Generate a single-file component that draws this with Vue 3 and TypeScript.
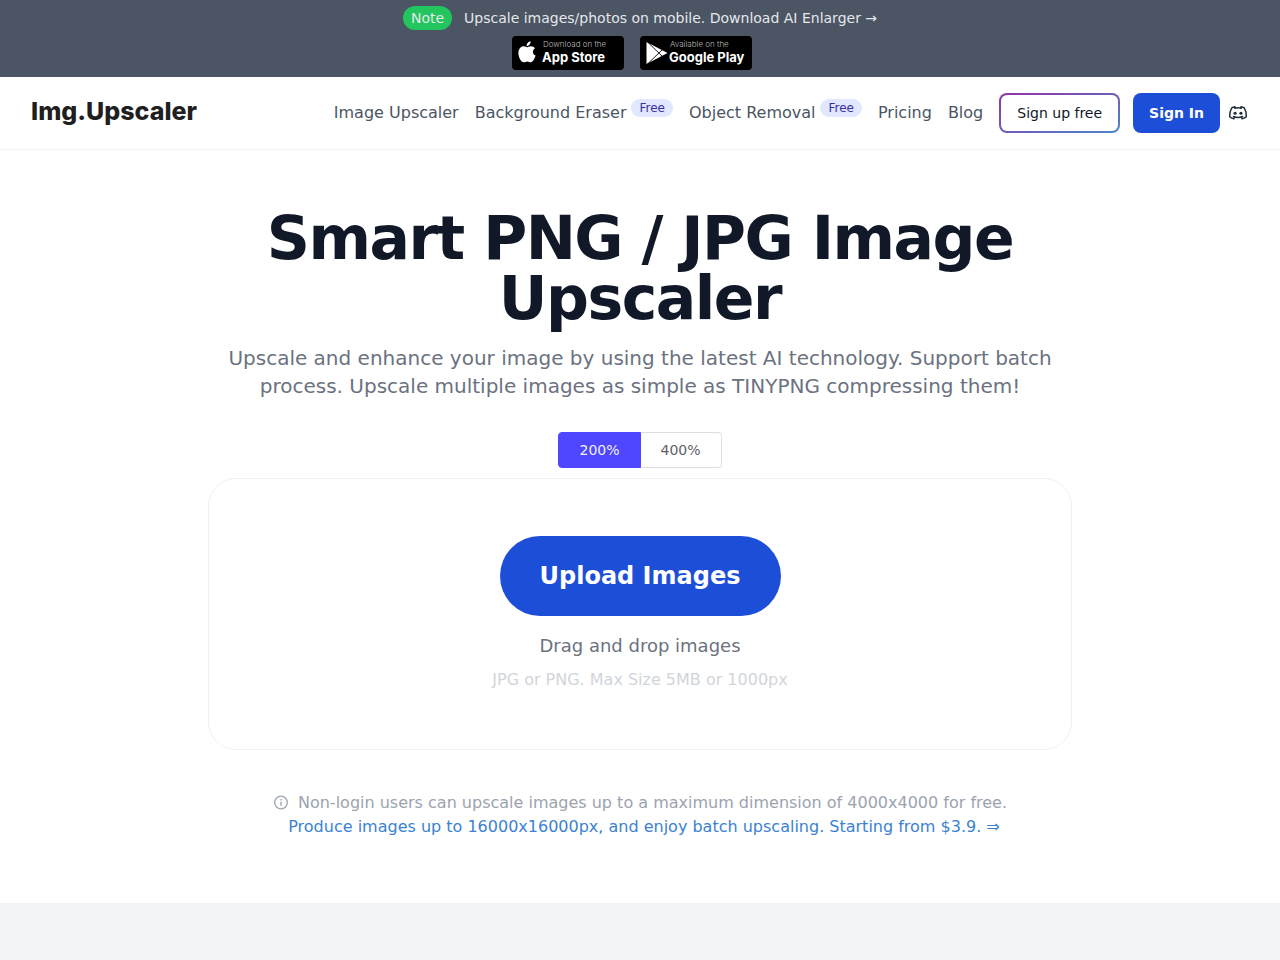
<script setup lang="ts">
import { ref } from 'vue'

interface NavItem {
  label: string
  free?: boolean
}

const navItems: NavItem[] = [
  { label: 'Image Upscaler' },
  { label: 'Background Eraser', free: true },
  { label: 'Object Removal', free: true },
  { label: 'Pricing' },
  { label: 'Blog' },
]

const scales: string[] = ['200%', '400%']
const scale = ref<string>('200%')
</script>

<template>
  <div class="page">
    <div class="banner">
      <a class="notice" href="#">
        <span class="note">Note</span>
        <span>Upscale images/photos on mobile. Download AI Enlarger →</span>
      </a>
      <div class="stores">
        <a class="store" href="#">
          <svg class="apple" viewBox="0 0 18 22" aria-hidden="true">
            <path d="M12.6 0.2C12.8 2.600 10.900 5 8.700 5C8.400 2.700 10.500 0.500 12.600 0.200Z M9.100 6.300C10 6.300 11 5.200 13 5.200C14.700 5.200 16.200 6 17 7.200C13.900 9 14.400 13.300 17.600 14.600C16.800 17.400 14.900 21.200 12.900 21.200C11.500 21.200 11 20.400 9.300 20.400C7.600 20.400 7 21.200 5.700 21.200C3.200 21.200 0.400 16.500 0.400 12C0.400 7.700 3.100 5.300 5.700 5.300C7.300 5.300 8.300 6.300 9.100 6.300Z" />
          </svg>
          <span class="store-text">
            <span class="store-top">Download on the</span>
            <span class="store-name">App Store</span>
          </span>
        </a>
        <a class="store play-store" href="#">
          <svg class="play" viewBox="0 0 22 24" aria-hidden="true">
            <path d="M0.500 1L21.500 12L0.500 23Z" />
            <path class="cut" d="M1 0.500L16.500 15.500M1 23.500L16.500 8.500" />
          </svg>
          <span class="store-text">
            <span class="store-top">Available on the</span>
            <span class="store-name">Google Play</span>
          </span>
        </a>
      </div>
    </div>

    <header class="header">
      <a class="logo" href="#">Img.Upscaler</a>
      <nav class="nav">
        <a v-for="item in navItems" :key="item.label" class="nav-link" href="#">
          {{ item.label }}<span v-if="item.free" class="free">Free</span>
        </a>
        <div class="actions">
          <button class="signup" type="button">Sign up free</button>
          <button class="signin" type="button">Sign In</button>
          <a class="discord" href="#" aria-label="Discord">
            <svg viewBox="0 0 24 24" aria-hidden="true">
              <circle class="eye" cx="8.500" cy="12.300" r="1.900" />
              <circle class="eye" cx="15.500" cy="12.300" r="1.900" />
              <path d="M8 6.200C10.500 5.600 13.500 5.600 16 6.200M6.500 16.200C10 17.700 14 17.700 17.500 16.200" />
              <path d="M16 16.800L17 19C19 18.600 20.700 17.900 22 16.600C22.200 12.500 21.400 9 19.500 5.900C18.200 5.100 17 4.700 15.600 4.500L15 6" />
              <path d="M8 16.800L7 19C5 18.600 3.300 17.900 2 16.600C1.800 12.500 2.600 9 4.500 5.900C5.800 5.100 7 4.700 8.400 4.500L9 6" />
            </svg>
          </a>
        </div>
      </nav>
    </header>

    <main class="hero">
      <h1>Smart PNG / JPG Image Upscaler</h1>
      <p class="lead">
        Upscale and enhance your image by using the latest AI technology. Support batch process.
        Upscale multiple images as simple as TINYPNG compressing them!
      </p>
      <div class="toggle" role="group" aria-label="Scale">
        <button
          v-for="option in scales"
          :key="option"
          type="button"
          class="option"
          :class="{ selected: scale === option }"
          :aria-pressed="scale === option"
          @click="scale = option"
        >{{ option }}</button>
      </div>
      <section class="drop">
        <button class="upload" type="button">Upload Images</button>
        <p class="drag">Drag and drop images</p>
        <p class="limit">JPG or PNG. Max Size 5MB or 1000px</p>
      </section>
      <div class="info">
        <p class="info-line">
          <svg viewBox="0 0 16 16" aria-hidden="true">
            <circle cx="8" cy="7.500" r="6.300" />
            <path d="M8 6.800V10.800M8 4.100V5.400" />
          </svg>
          <span>Non-login users can upscale images up to a maximum dimension of 4000x4000 for free.</span>
        </p>
        <a class="plans" href="#">Produce images up to 16000x16000px, and enjoy batch upscaling. Starting from $3.9. ⇒</a>
      </div>
    </main>
    <section class="next"></section>
  </div>
</template>

<style>
body {
  margin: 0;
  background: #fff;
}
</style>

<style scoped>
.page {
  display: flex;
  flex-direction: column;
  min-height: 100vh;
  font-family: "DejaVu Sans", sans-serif;
  font-size: 16px;
  line-height: 24px;
  color: #111827;
}

.page * {
  box-sizing: border-box;
}

a {
  color: inherit;
  text-decoration: none;
}

button {
  font-family: inherit;
  cursor: pointer;
}

p,
h1 {
  margin: 0;
}

.banner {
  display: flex;
  flex-direction: column;
  align-items: center;
  gap: 6px;
  padding: 6px 0 7px;
  background: #4b5563;
}

.notice {
  display: flex;
  gap: 12px;
  font-size: 14px;
  color: #e5e7eb;
}

.note {
  padding: 0 8px;
  border-radius: 12px;
  background: #22c55e;
}

.stores {
  display: flex;
  gap: 16px;
  padding-right: 16px;
}

.store {
  display: flex;
  gap: 6px;
  width: 112px;
  height: 34px;
  padding: 4px 0 0 6px;
  border-radius: 4px;
  background: #000;
  color: #fff;
  font-family: Inter, sans-serif;
  white-space: nowrap;
}

.play-store {
  gap: 1px;
}

.apple {
  width: 18px;
  height: 24px;
  fill: #fff;
}

.play {
  width: 22px;
  height: 26px;
  fill: #fff;
}

.cut {
  fill: none;
  stroke: #000;
  stroke-width: 0.9;
}

.store-text {
  display: flex;
  flex-direction: column;
}

.store-top {
  padding-left: 1px;
  font-size: 8px;
  font-weight: 300;
  line-height: 9px;
  color: #bbb;
}

.store-name {
  font-size: 13px;
  font-weight: 700;
  line-height: 16px;
}

.header {
  display: flex;
  align-items: center;
  justify-content: space-between;
  padding: 16px 32px 16px 31px;
  border-bottom: 1px solid #f3f4f6;
}

.logo {
  align-self: flex-start;
  font-family: Inter, sans-serif;
  font-size: 25px;
  font-weight: 800;
  line-height: 36px;
  color: #1f1f1f;
}

.nav {
  display: flex;
  align-items: center;
  gap: 16px;
  color: #4b5563;
  white-space: nowrap;
}

.nav-link {
  display: flex;
}

.free {
  align-self: flex-start;
  margin: -2px 0 0 5px;
  padding: 0 8px;
  border-radius: 9px;
  background: #e0e7ff;
  color: #3730a3;
  font-size: 12px;
  line-height: 18px;
}

.actions {
  display: flex;
  align-items: center;
}

.signup,
.signin {
  height: 40px;
  font-size: 14px;
  line-height: 20px;
  border-radius: 8px;
}

.signup {
  padding: 0 16px;
  border: 2px solid transparent;
  background:
    linear-gradient(#fff, #fff) padding-box,
    linear-gradient(to bottom right, #9333a8, #4b87c6) border-box;
  color: #111827;
}

.signin {
  margin-left: 13px;
  padding: 0 16px;
  border: 0;
  background: #1d4ed8;
  color: #fff;
  font-weight: 700;
}

.discord {
  display: flex;
  margin-left: 8px;
}

.discord svg {
  width: 20px;
  height: 20px;
  fill: none;
  stroke: #1f2937;
  stroke-width: 1.7;
  stroke-linecap: round;
  stroke-linejoin: round;
}

.discord .eye {
  fill: #1f2937;
  stroke: none;
}

.hero {
  width: 100%;
  max-width: 896px;
  margin: 0 auto;
  padding: 58px 16px 64px;
  text-align: center;
}

h1 {
  font-size: 60px;
  font-weight: 700;
  line-height: 60px;
  letter-spacing: -0.025em;
}

.lead {
  margin-top: 16px;
  font-size: 20px;
  line-height: 28px;
  color: #6b7280;
}

.toggle {
  display: flex;
  justify-content: center;
  margin-top: 32px;
}

.option {
  height: 36px;
  padding: 0 20px;
  border: 1px solid #dcdfe6;
  border-left: 0;
  border-radius: 0 4px 4px 0;
  background: #fff;
  color: #606266;
  font-size: 14px;
}

.option:first-child {
  border-left: 1px solid #4f46ff;
  border-radius: 4px 0 0 4px;
}

.option.selected {
  border-color: #4f46ff;
  background: #4f46ff;
  color: #eef2ff;
}

.drop {
  margin-top: 10px;
  padding: 57px 16px;
  border: 1px solid #f0f0f1;
  border-radius: 28px;
}

.upload {
  height: 80px;
  padding: 0 40px;
  border: 0;
  border-radius: 40px;
  background: #1d4ed8;
  color: #fff;
  font-size: 24px;
  font-weight: 700;
  line-height: 32px;
}

.drag {
  margin-top: 16px;
  font-size: 18px;
  line-height: 28px;
  color: #6b7280;
}

.limit {
  margin-top: 8px;
  color: #d1d5db;
}

.info {
  margin-top: 41px;
}

.info-line {
  display: flex;
  align-items: center;
  justify-content: center;
  gap: 9px;
  color: #9ca3af;
}

.info-line svg {
  width: 16px;
  height: 16px;
  fill: none;
  stroke: #9ca3af;
  stroke-width: 1.3;
}

.plans {
  padding-left: 8px;
  color: #3b82d0;
}

.next {
  flex: 1;
  background: #f3f4f6;
}
</style>
